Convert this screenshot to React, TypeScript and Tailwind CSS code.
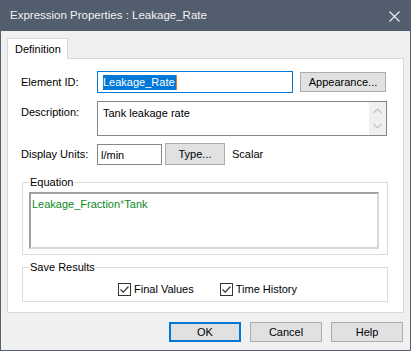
const font = { fontFamily: '"Liberation Sans", Arial, sans-serif' };

const WinButton = ({ label, wide, primary }: { label: string; wide: string; primary?: boolean }) => (
  <div
    className={`${wide} h-[20px] flex items-center justify-center bg-[#e1e1e1] text-[11px] text-black ${
      primary ? "border-2 border-[#0078d7]" : "border border-[#adadad]"
    }`}
  >
    {label}
  </div>
);

const CheckBox = ({ label }: { label: string }) => (
  <div className="flex items-center gap-[3px]">
    <div className="w-[13px] h-[13px] border border-[#333333] bg-white flex items-center justify-center">
      <svg width="11" height="11" viewBox="0 0 11 11">
        <path d="M1.5 5.5 L4.2 8.2 L9.5 2.5" fill="none" stroke="#333333" strokeWidth="1.2" />
      </svg>
    </div>
    <span className="text-[11px] text-black leading-[13px]">{label}</span>
  </div>
);

const Chevron = ({ up }: { up?: boolean }) => (
  <svg width="9" height="6" viewBox="0 0 9 6">
    <path d={up ? "M0.5 5 L4.5 1 L8.5 5" : "M0.5 1 L4.5 5 L8.5 1"} fill="none" stroke="#c2c2c2" strokeWidth="1.2" />
  </svg>
);

export default function App() {
  return (
    <div className="w-[411px] h-[351px] bg-[#f0f0f0] border border-[#55606f] flex flex-col" style={font}>
      {/* Title bar */}
      <div className="h-[30px] shrink-0 bg-[#525d6d] flex items-center justify-between pl-[9px] pr-[10px]">
        <span className="text-[11.5px] text-[#f2f2f2]">Expression Properties : Leakage_Rate</span>
        <svg width="11" height="11" viewBox="0 0 11 11">
          <path d="M0.5 0.5 L10.5 10.5 M10.5 0.5 L0.5 10.5" stroke="#f2f2f2" strokeWidth="1.1" />
        </svg>
      </div>

      <div className="flex flex-col px-[6px] pt-[7px]">
        {/* Tab */}
        <div className="relative z-10 -mb-[1px] w-[61px] h-[21px] bg-white border border-b-0 border-[#d9d9d9] flex items-center pl-[7px] text-[11px] text-black">
          Definition
        </div>

        {/* Tab panel */}
        <div className="h-[255px] bg-white border border-[#d9d9d9] pl-[13px] pr-[15px] pt-[12px] flex flex-col">
          {/* Element ID */}
          <div className="flex items-center h-[22px]">
            <span className="w-[76px] text-[11px] text-black">Element ID:</span>
            <div className="w-[196px] h-[22px] border border-[#0078d7] flex items-center pl-[5px]">
              <span className="bg-[#0078d7] text-white text-[11px] leading-[15px] pr-[1px] border-r border-[#e8772a]">
                Leakage_Rate
              </span>
            </div>
            <div className="ml-[7px]">
              <WinButton label="Appearance..." wide="w-[86px]" />
            </div>
          </div>

          {/* Description */}
          <div className="flex mt-[8px]">
            <span className="w-[76px] text-[11px] text-black pt-[3px]">Description:</span>
            <div className="w-[290px] h-[35px] border border-[#828790] flex">
              <div className="flex-1 pl-[5px] pt-[3px] text-[11px] text-black">Tank leakage rate</div>
              <div className="w-[17px] bg-[#f0f0f0] flex flex-col items-center justify-between py-[6px]">
                <Chevron up />
                <Chevron />
              </div>
            </div>
          </div>

          {/* Display units */}
          <div className="flex items-center mt-[7px]">
            <span className="w-[76px] text-[11px] text-black">Display Units:</span>
            <div className="w-[65px] h-[21px] border border-[#828790] flex items-start pl-[3px] pt-[2px] text-[11px] text-black">
              l/min
            </div>
            <div className="ml-[3px]">
              <div className="w-[60px] h-[22px] flex items-center justify-center bg-[#e1e1e1] border border-[#adadad] text-[11px] text-black">
                Type...
              </div>
            </div>
            <span className="ml-[7px] text-[11px] text-black">Scalar</span>
          </div>

          {/* Equation */}
          <fieldset className="ml-[1px] mt-[9px] border border-[#dcdcdc] px-[6px] pt-[2px] pb-[5px]">
            <legend className="px-[1px] text-[11px] leading-[16px] text-black">Equation</legend>
            <div className="w-[350px] h-[57px] border-2 border-t-[#a0a0a0] border-l-[#a0a0a0] border-r-[#d8d8d8] border-b-[#d8d8d8] pl-[1px] pt-[2px] text-[11px] text-[#0a8a1e]">
              Leakage_Fraction<span className="text-[#6c9c74]">*</span>Tank
            </div>
          </fieldset>

          {/* Save Results */}
          <fieldset className="ml-[1px] mt-[4px] border border-[#dcdcdc] px-[6px] pt-[8px] pb-[5px]">
            <legend className="px-[1px] text-[11px] leading-[16px] text-black">Save Results</legend>
            <div className="flex items-center gap-[26px] pl-[89px] h-[13px]">
              <CheckBox label="Final Values" />
              <CheckBox label="Time History" />
            </div>
          </fieldset>
        </div>

        {/* Dialog buttons */}
        <div className="flex justify-end gap-[9px] mt-[9px] pr-[1px]">
          <WinButton label="OK" wide="w-[72px]" primary />
          <WinButton label="Cancel" wide="w-[72px]" />
          <WinButton label="Help" wide="w-[72px]" />
        </div>
      </div>
    </div>
  );
}
